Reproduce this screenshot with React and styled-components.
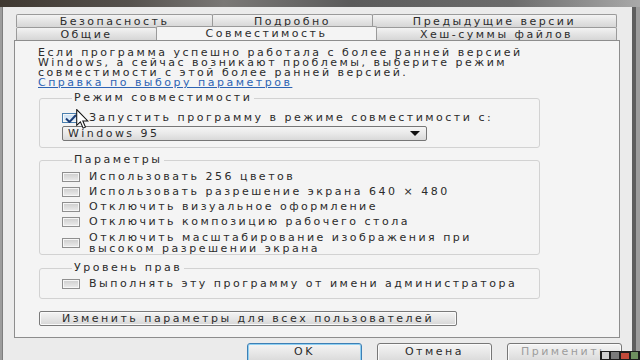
import React from "react";
import styled, { createGlobalStyle, css } from "styled-components";

const GlobalStyle = createGlobalStyle`
  html, body { margin: 0; padding: 0; }
  body { background: #a8a8a8; }
  * { box-sizing: border-box; }
`;

const uiText = css`
  font-family: "DejaVu Sans", "Liberation Sans", sans-serif;
  font-size: 11px;
  letter-spacing: 2.5px;
  line-height: 10px;
  color: #2b2b2b;
  white-space: nowrap;
`;

const Screen = styled.div`
  position: relative;
  width: 640px;
  height: 360px;
  overflow: hidden;
  background: #9c9c9c;
  display: flex;
  flex-direction: column;
`;

const TitleStrip = styled.div`
  height: 7px;
  flex: none;
  background: linear-gradient(90deg, #3f3831 0%, #55514d 20%, #7a7876 35%, #5b5b5b 55%, #6c6c6c 80%, #a9a9a9 100%);
`;

const Frame = styled.div`
  flex: 1;
  width: 634px;
  margin-left: 2px;
  border-left: 1px solid #7d7d7d;
  border-right: 4px solid #5e5e5e;
  background: #ebebeb;
  padding: 7px 12px 0 11px;
  display: flex;
  flex-direction: column;
`;

const TabRow = styled.div`
  display: flex;
  height: 13px;
  padding: 0 3px 0 2px;
`;

const Tab = styled.div`
  ${uiText};
  width: ${(p) => p.$w}px;
  height: ${(p) => (p.$active ? 14 : 13)}px;
  margin-top: ${(p) => (p.$active ? -1 : 0)}px;
  margin-left: -1px;
  &:first-child { margin-left: 0; }
  border: 1px solid #9a9a9a;
  border-bottom: none;
  border-radius: 2px 2px 0 0;
  background: ${(p) =>
    p.$active ? "#f4f4f4" : "linear-gradient(180deg, #f3f3f3 0%, #e4e4e4 50%, #d6d6d6 100%)"};
  position: relative;
  z-index: ${(p) => (p.$active ? 2 : 1)};
  display: flex;
  align-items: center;
  justify-content: center;
  padding-top: 1px;
  color: #2c2c2c;
`;

const Panel = styled.div`
  height: 298px;
  flex: none;
  border: 1px solid #8d8d8d;
  background: #f4f4f4;
  padding: 7px 0 0 23px;
  display: flex;
  flex-direction: column;
  align-items: flex-start;
`;

const Description = styled.p`
  ${uiText};
  margin: 0;
`;

const HelpLink = styled.a`
  ${uiText};
  color: #2d63b3;
  text-decoration: underline;
  cursor: pointer;
`;

const Group = styled.fieldset`
  width: 501px;
  margin: ${(p) => p.$top}px 0 0 1px;
  padding: ${(p) => p.$pt}px 0 ${(p) => p.$pb}px 22px;
  border: 1px solid #d2d2d2;
  border-radius: 3px;
  min-width: 0;
`;

const GroupTitle = styled.legend`
  ${uiText};
  margin-left: 10px;
  padding: 0 2px;
`;

const CheckRow = styled.label`
  display: flex;
  align-items: center;
  gap: 9px;
  height: ${(p) => p.$h}px;
  margin-top: ${(p) => p.$mt || 0}px;
`;

const Box = styled.span`
  width: 18px;
  height: 10px;
  flex: none;
  border: 1px solid ${(p) => (p.$checked ? "#4a7fae" : "#8f8f8f")};
  background: ${(p) =>
    p.$checked
      ? "linear-gradient(180deg, #c9e0f4, #e8f2fb)"
      : "linear-gradient(180deg, #cdcdcd, #ececec)"};
  box-shadow: inset 0 0 0 1px #f6f6f6;
  display: flex;
  align-items: center;
  justify-content: center;
`;

const CheckText = styled.span`
  ${uiText};
  line-height: ${(p) => p.$lh || 10}px;
`;

const Select = styled.div`
  ${uiText};
  width: 365px;
  height: 15px;
  margin-top: 2px;
  border: 1px solid #767676;
  border-radius: 2px;
  background: linear-gradient(180deg, #f5f5f5 0%, #e9e9e9 50%, #d9d9d9 100%);
  display: flex;
  align-items: center;
  justify-content: space-between;
  padding: 0 6px 0 5px;
`;

const WideButton = styled.button`
  ${uiText};
  width: 418px;
  height: 15px;
  margin: 12px 0 0 1px;
  padding: 0;
  border: 1px solid #7a7a7a;
  border-radius: 2px;
  background: linear-gradient(180deg, #f4f4f4 0%, #e6e6e6 50%, #d6d6d6 100%);
  box-shadow: inset 0 0 0 1px #fafafa;
`;

const ButtonBar = styled.div`
  display: flex;
  justify-content: flex-end;
  gap: 15px;
  margin: 5px -2px 0 0;
`;

const DialogButton = styled.button`
  ${uiText};
  width: 115px;
  height: 22px;
  padding: 3px 0 0;
  display: flex;
  justify-content: center;
  align-items: flex-start;
  border: 1px solid ${(p) => (p.$focused ? "#3d7fb5" : "#777")};
  border-radius: 3px;
  background: linear-gradient(180deg, #f4f4f4 0%, #e5e5e5 50%, #d5d5d5 100%);
  box-shadow: inset 0 0 0 1px ${(p) => (p.$focused ? "#8fd0f2" : "#fafafa")};
  color: ${(p) => (p.$disabled ? "#9d9d9d" : "#2b2b2b")};
`;

const Pointer = styled.svg`
  position: absolute;
  left: 75px;
  top: 109px;
  z-index: 5;
`;

const Badge = styled.svg`
  position: absolute;
  right: 0;
  bottom: 0;
  z-index: 5;
`;

const Arrow = () => (
  <svg width="10" height="5" viewBox="0 0 10 5">
    <path d="M0 0 H10 L5 5 Z" fill="#111" />
  </svg>
);

const Check = () => (
  <svg width="12" height="9" viewBox="0 0 12 9">
    <path d="M1 4.5 L4.5 8 L11 1" fill="none" stroke="#1d3f78" strokeWidth="2" />
  </svg>
);

function Option({ checked, children, h = 15, mt, lh }) {
  return (
    <CheckRow $h={h} $mt={mt}>
      <Box $checked={checked}>{checked && <Check />}</Box>
      <CheckText $lh={lh}>{children}</CheckText>
    </CheckRow>
  );
}

export default function App() {
  return (
    <Screen>
      <GlobalStyle />
      <TitleStrip />
      <Frame>
        <TabRow>
          <Tab $w={197}>Безопасность</Tab>
          <Tab $w={161}>Подробно</Tab>
          <Tab $w={245}>Предыдущие версии</Tab>
        </TabRow>
        <TabRow>
          <Tab $w={141}>Общие</Tab>
          <Tab $w={221} $active>Совместимость</Tab>
          <Tab $w={241}>Хеш-суммы файлов</Tab>
        </TabRow>
        <Panel>
          <Description>
            Если программа успешно работала с более ранней версией
            <br />
            Windows, а сейчас возникают проблемы, выберите режим
            <br />
            совместимости с этой более ранней версией.
          </Description>
          <HelpLink>Справка по выбору параметров</HelpLink>

          <Group $top={5} $pt={9} $pb={6}>
            <GroupTitle>Режим совместимости</GroupTitle>
            <Option checked h={12}>
              Запустить программу в режиме совместимости с:
            </Option>
            <Select>
              <span>Windows 95</span>
              <Arrow />
            </Select>
          </Group>

          <Group $top={7} $pt={4} $pb={0}>
            <GroupTitle>Параметры</GroupTitle>
            <Option>Использовать 256 цветов</Option>
            <Option>Использовать разрешение экрана 640 × 480</Option>
            <Option>Отключить визуальное оформление</Option>
            <Option>Отключить композицию рабочего стола</Option>
            <Option h={22} mt={3} lh={11}>
              Отключить масштабирование изображения при
              <br />
              высоком разрешении экрана
            </Option>
          </Group>

          <Group $top={8} $pt={3} $pb={7}>
            <GroupTitle>Уровень прав</GroupTitle>
            <Option>Выполнять эту программу от имени администратора</Option>
          </Group>

          <WideButton>Изменить параметры для всех пользователей</WideButton>
        </Panel>
        <ButtonBar>
          <DialogButton $focused>OK</DialogButton>
          <DialogButton>Отмена</DialogButton>
          <DialogButton $disabled>Применить</DialogButton>
        </ButtonBar>
      </Frame>

      <Pointer width="15" height="20" viewBox="0 0 12 19">
        <path d="M0.5 0.5 V15.5 L4 12.2 L6.6 18.2 L8.8 17.2 L6.3 11.4 H11 Z" fill="#fff" stroke="#111" strokeWidth="1" />
      </Pointer>

      <Badge width="40" height="9" viewBox="0 0 40 9">
        <rect x="0" y="0" width="40" height="9" fill="#1e1e1e" />
        <rect x="2" y="1" width="7" height="7" fill="#cfcfcf" />
        <rect x="11" y="1" width="8" height="7" fill="#7a7a7a" />
        <rect x="21" y="2" width="8" height="6" fill="#c24a3a" />
        <rect x="31" y="1" width="7" height="7" fill="#6e8f5f" />
      </Badge>
    </Screen>
  );
}
